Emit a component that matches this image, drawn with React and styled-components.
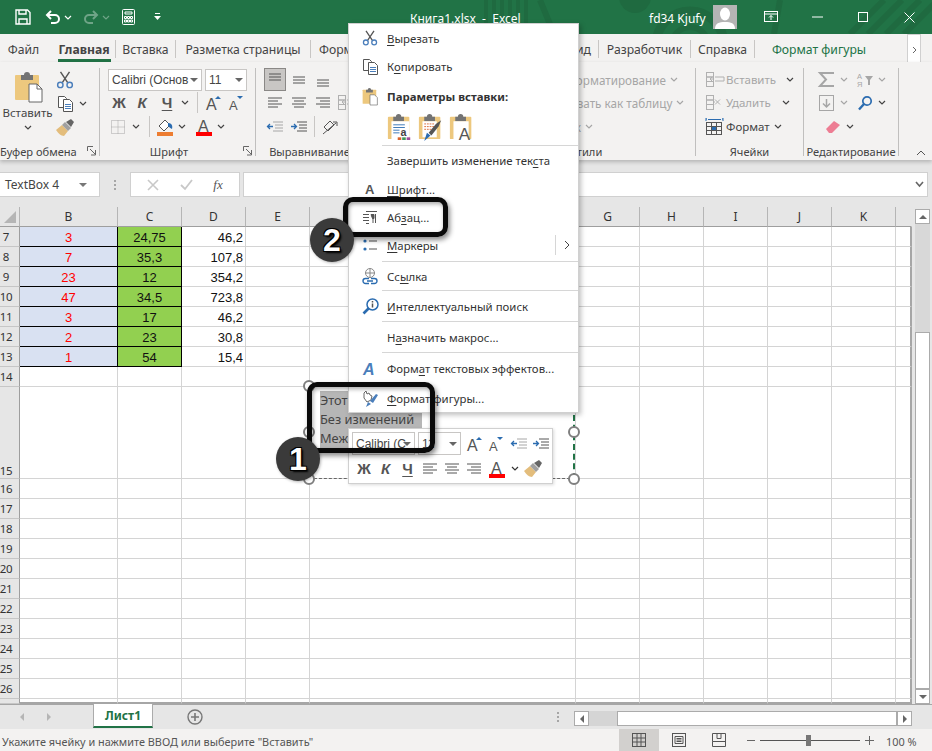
import React from 'react';
import styled, { createGlobalStyle } from 'styled-components';

const UI = `"Noto Sans", "Open Sans", sans-serif`;
const CELL = `"Liberation Sans", Arial, sans-serif`;

const Global = createGlobalStyle`
  html, body { margin: 0; padding: 0; background: #fff; }
  body { font-family: ${UI}; color: #444; }
  u { text-underline-offset: 2px; text-decoration-thickness: 1px; }
  svg { overflow: visible; }
`;

const Page = styled.div`
  position: relative;
  width: 932px;
  height: 751px;
  overflow: hidden;
  display: flex;
  flex-direction: column;
  background: #e6e6e6;
`;

/* ---------- title bar ---------- */
const TitleBar = styled.div`
  position: relative;
  height: 34px;
  flex: none;
  display: flex;
  align-items: center;
  background: #217346;
  color: #fff;
  font-size: 12px;
  overflow: hidden;
`;
const Pattern = styled.svg`
  position: absolute;
  inset: 0;
  overflow: hidden;
`;
const Quick = styled.div`
  position: relative;
  width: 410px;
  flex: none;
  display: flex;
  align-items: center;
  padding-left: 14px;
  box-sizing: border-box;
  height: 100%;
`;
const QuickSlot = styled.div`
  width: ${(p) => p.$w}px;
  flex: none;
  display: flex;
  align-items: center;
  justify-content: center;
  opacity: ${(p) => (p.$dim ? 0.35 : 1)};
`;
const DocTitle = styled.div`
  position: relative;
  width: 239px;
  flex: none;
  white-space: pre;
  padding-top: 3px;
  box-sizing: border-box;
`;
const UserName = styled.div`
  position: relative;
  width: 64px;
  flex: none;
  white-space: nowrap;
  padding-top: 3px;
  box-sizing: border-box;
`;
const Avatar = styled.div`
  position: relative;
  width: 24px;
  height: 24px;
  flex: none;
  background: #b4b4b4;
  overflow: hidden;
`;
const WinBtn = styled.div`
  position: relative;
  width: 46px;
  flex: none;
  display: flex;
  justify-content: center;
  margin-left: ${(p) => p.$ml || 0}px;
`;

/* ---------- tabs ---------- */
const TabRow = styled.div`
  height: 28px;
  flex: none;
  display: flex;
  background: #f3f2f1;
  position: relative;
`;
const Tab = styled.div`
  position: relative;
  width: ${(p) => p.$w}px;
  flex: none;
  display: flex;
  align-items: center;
  justify-content: center;
  font-size: 12.2px;
  font-weight: ${(p) => (p.$active ? 700 : 400)};
  color: ${(p) => (p.$green ? '#217346' : '#444')};
  white-space: nowrap;
  padding: 3px 0 0 ${(p) => p.$pl || 0}px;
  box-sizing: border-box;
  ${(p) => p.$sep && `border-right: 1px solid transparent;
    &::before { content: ''; position: absolute; right: -1px; top: 6px; height: 18px; width: 1px; background: #c8c6c4; }`}
  ${(p) => p.$active && `&::after { content: ''; position: absolute; left: 11px; right: 4px; bottom: 0; height: 3px; background: #217346; }`}
`;
const TabScroll = styled.div`
  position: absolute;
  right: 11px;
  top: 0;
  width: 12px;
  height: 29px;
  background: #fff;
  border: 1px solid #d0d0d0;
  display: flex;
  align-items: center;
  justify-content: center;
`;

/* ---------- ribbon ---------- */
const Ribbon = styled.div`
  position: relative;
  height: 98px;
  flex: none;
  display: flex;
  box-sizing: border-box;
  padding: 6px 0 4px;
  background: #f3f2f1;
  box-shadow: 0 2px 4px rgba(0, 0, 0, 0.22);
  z-index: 1;
`;
const Group = styled.div`
  width: ${(p) => p.$w}px;
  flex: none;
  box-sizing: border-box;
  display: flex;
  flex-direction: column;
  border-right: 1px solid ${(p) => (p.$noline ? 'transparent' : '#c0bfbe')};
`;
const GroupBody = styled.div`
  flex: 1;
  display: flex;
  padding-left: ${(p) => p.$pl || 0}px;
  min-height: 0;
`;
const GroupLabel = styled.div`
  height: 16px;
  margin-bottom: -3px;
  display: grid;
  grid-template-columns: 1fr auto 1fr;
  align-items: center;
  font-size: 11.1px;
  color: #444;
  white-space: nowrap;
  padding-right: ${(p) => p.$pr || 0}px;
  position: relative;
`;
const Launcher = styled.div`
  position: absolute;
  right: 2px;
  top: 3px;
  display: flex;
`;
const Stack = styled.div`
  display: flex;
  flex-direction: column;
  width: ${(p) => (p.$w ? `${p.$w}px` : 'auto')};
`;
const RowA = styled.div`
  height: ${(p) => p.$h || 23}px;
  display: flex;
  align-items: center;
  flex: none;
`;
const Tool = styled.div`
  width: ${(p) => p.$w || 22}px;
  height: ${(p) => p.$h || 22}px;
  margin-left: ${(p) => p.$ml || 0}px;
  flex: none;
  display: flex;
  align-items: center;
  justify-content: center;
  box-sizing: border-box;
  font-family: ${CELL};
  font-size: 15px;
  color: #555;
  ${(p) => p.$on && `background: #c8c6c4; border: 1px solid #8a8886;`}
`;
const Vsep = styled.div`
  width: 1px;
  height: 21px;
  background: #c8c6c4;
  margin-left: ${(p) => p.$ml || 0}px;
  flex: none;
`;
const Combo = styled.div`
  width: ${(p) => p.$w}px;
  height: ${(p) => p.$h || 22}px;
  margin-left: ${(p) => p.$ml || 0}px;
  flex: none;
  box-sizing: border-box;
  background: #fff;
  border: 1px solid #c8c6c4;
  display: flex;
  align-items: center;
  gap: 3px;
  padding: 0 3px;
  font-family: ${CELL};
  font-size: 12px;
  color: #444;
  white-space: nowrap;
`;
const ComboText = styled.span`
  flex: 1;
  min-width: 0;
`;
const PasteBtn = styled.div`
  width: 55px;
  flex: none;
  display: flex;
  flex-direction: column;
  align-items: center;
  font-size: 11.5px;
  color: #444;
  padding-top: 4px;
  & > span { margin: 3px 0 5px; }
`;
const StyleRow = styled(RowA)`
  padding-left: 34px;
  font-size: 11.7px;
  color: #a6a6a6;
  white-space: nowrap;
  gap: 4px;
`;
const CellRow = styled(RowA)`
  padding-left: 9px;
  font-size: 11.5px;
  color: ${(p) => (p.$dark ? '#444' : '#a6a6a6')};
  white-space: nowrap;
`;
const CellIcon = styled.div`
  width: 21px;
  flex: none;
  display: flex;
`;
const CellChev = styled.div`
  margin-left: ${(p) => p.$ml}px;
  display: flex;
`;
const Collapse = styled.div`
  flex: 1;
  display: flex;
  align-items: flex-end;
  justify-content: center;
  padding-left: 10px;
`;

/* ---------- formula bar ---------- */
const FormulaBar = styled.div`
  height: 47px;
  flex: none;
  box-sizing: border-box;
  padding-top: 12px;
  display: flex;
  align-items: flex-start;
  background: #e6e6e6;
`;
const NameBox = styled.div`
  width: 100px;
  height: 25px;
  box-sizing: border-box;
  background: #fff;
  border: 1px solid #d0d0d0;
  border-left: none;
  display: flex;
  align-items: center;
  justify-content: space-between;
  padding: 0 12px 0 5px;
  font-size: 12px;
  color: #444;
`;
const Dots = styled.div`
  width: 30px;
  height: 25px;
  display: flex;
  flex-direction: column;
  align-items: center;
  justify-content: center;
  gap: 2px;
  & > i { width: 2px; height: 2px; background: #a6a6a6; display: block; }
`;
const FxBox = styled.div`
  width: 110px;
  height: 25px;
  box-sizing: border-box;
  background: #fff;
  border: 1px solid #d0d0d0;
  display: flex;
  align-items: center;
  justify-content: space-around;
  padding: 0 6px;
`;
const FxLabel = styled.span`
  font-family: "Liberation Serif", serif;
  font-style: italic;
  font-size: 13px;
  color: #555;
`;
const Formula = styled.div`
  width: 685px;
  height: 25px;
  margin-left: 3px;
  box-sizing: border-box;
  background: #fff;
  border: 1px solid #d0d0d0;
  display: flex;
  align-items: center;
  justify-content: flex-end;
  padding-right: 3px;
`;

/* ---------- sheet ---------- */
const SheetArea = styled.div`
  height: 497px;
  flex: none;
  display: flex;
  background: #e6e6e6;
`;
const SheetGrid = styled.div`
  width: 912px;
  flex: none;
  display: grid;
  grid-template-columns: 20px 98px 64px 64px 64px 266px repeat(5, 64px) 16px;
  grid-template-rows: 20px repeat(8, 20px) 92px repeat(11, 20px) 5px;
  background: #fff;
`;
const ColHead = styled.div`
  background: #e6e6e6;
  border-right: 1px solid ${(p) => (p.$plain ? 'transparent' : '#b5b5b5')};
  border-bottom: 1px solid #9e9e9e;
  display: flex;
  align-items: center;
  justify-content: center;
  font-size: 12px;
  color: #333;
  position: relative;
`;
const RowHead = styled.div`
  background: #e6e6e6;
  border-right: 1px solid #9e9e9e;
  border-bottom: 1px solid #c6c6c6;
  display: flex;
  align-items: ${(p) => (p.$tall ? 'flex-end' : 'center')};
  justify-content: center;
  padding-right: 7px;
  font-size: 11.5px;
  letter-spacing: -0.3px;
  color: #333;
  white-space: nowrap;
`;
const Cell = styled.div`
  box-sizing: border-box;
  border-right: ${(p) => (p.$last ? '2px solid #a6a6a6' : p.$kind === 'b' || p.$kind === 'c' ? '1px solid #000' : '1px solid #d4d4d4')};
  border-bottom: ${(p) => (p.$kind === 'b' || p.$kind === 'c' ? '1px solid #000' : p.$edge ? '2px solid #a6a6a6' : '1px solid #d4d4d4')};
  background: ${(p) => (p.$kind === 'b' ? '#d9e1f2' : p.$kind === 'c' ? '#92d050' : '#fff')};
  color: ${(p) => (p.$kind === 'b' ? '#f00' : '#111')};
  display: flex;
  align-items: center;
  justify-content: ${(p) => (p.$kind === 'd' ? 'flex-end' : 'center')};
  padding: 1px ${(p) => (p.$kind === 'd' ? '2px' : '0')} 0 0;
  font-family: ${CELL};
  font-size: 13px;
`;
const VScroll = styled.div`
  width: 15px;
  margin-left: 3px;
  flex: none;
  display: flex;
  flex-direction: column;
  background: #d8d8d8;
  margin-top: 2px;
`;
const VBtn = styled.div`
  height: 15px;
  flex: none;
  box-sizing: border-box;
  background: #fff;
  border: 1px solid #ababab;
  display: flex;
  align-items: center;
  justify-content: center;
`;
const VThumb = styled.div`
  flex: 1;
  margin-top: 108px;
  box-sizing: border-box;
  background: #fff;
  border: 1px solid #ababab;
`;

/* ---------- sheet tabs + status ---------- */
const TabsBar = styled.div`
  height: 25px;
  flex: none;
  display: flex;
  background: #e6e6e6;
  border-top: 1px solid #a6a6a6;
  box-sizing: border-box;
`;
const NavArrows = styled.div`
  width: 93px;
  flex: none;
  display: flex;
  align-items: center;
  justify-content: flex-start;
  gap: 21px;
  padding-left: 19px;
  box-sizing: border-box;
`;
const SheetTab = styled.div`
  width: 60px;
  height: 24px;
  flex: none;
  box-sizing: border-box;
  margin-top: -1px;
  background: #fff;
  border-left: 1px solid #ababab;
  border-right: 1px solid #ababab;
  border-bottom: 2px solid #217346;
  display: flex;
  align-items: center;
  justify-content: center;
  font-size: 12px;
  font-weight: 700;
  color: #217346;
`;
const AddSheet = styled.div`
  margin-left: 34px;
  width: 16px;
  display: flex;
  align-items: center;
`;
const SplitDots = styled(Dots)`
  width: 6px;
  height: 24px;
  margin-left: 352px;
`;
const HScroll = styled.div`
  margin: 6px 0 0 13px;
  width: 337px;
  height: 15px;
  display: flex;
  background: #d5d5d5;
`;
const HBtn = styled.div`
  width: 15px;
  flex: none;
  box-sizing: border-box;
  background: #fff;
  border: 1px solid #ababab;
  display: flex;
  align-items: center;
  justify-content: center;
`;
const HThumb = styled.div`
  width: 280px;
  margin-left: 28px;
  flex: none;
  box-sizing: border-box;
  background: #fff;
  border: 1px solid #ababab;
`;
const StatusBar = styled.div`
  height: 22px;
  flex: none;
  display: flex;
  align-items: center;
  background: #f3f2f1;
  font-size: 10.9px;
  color: #555;
  white-space: nowrap;
`;
const StatusText = styled.div`
  width: 619px;
  flex: none;
  padding: 2px 0 0 2px;
  box-sizing: border-box;
`;
const ViewBtn = styled.div`
  width: 40px;
  height: 22px;
  flex: none;
  display: flex;
  align-items: center;
  justify-content: center;
  background: ${(p) => (p.$on ? '#d2d0ce' : 'transparent')};
`;
const ZoomSlider = styled.div`
  margin-left: 8px;
  display: flex;
  align-items: center;
  gap: 5px;
`;
const Track = styled.div`
  position: relative;
  width: 100px;
  height: 1px;
  background: #555;
`;
const Knob = styled.div`
  position: absolute;
  left: 46px;
  top: -5px;
  width: 5px;
  height: 11px;
  background: #777;
`;
const ZoomPct = styled.div`
  margin-left: 12px;
  padding-top: 2px;
`;

/* ---------- overlays ---------- */
const TextBox = styled.div`
  position: absolute;
  left: 309px;
  top: 386px;
  width: 266px;
  height: 93px;
  box-sizing: border-box;
  padding: 5px 0 0 10px;
  border-left: 1px dashed #666;
  border-bottom: 1px dashed #666;
  border-right: 2px dashed #217346;
  font-size: 12.8px;
  color: #444;
`;
const SelLine = styled.div`
  width: 102px;
  height: 19px;
  line-height: 19px;
  background: #b6b6b6;
  white-space: nowrap;
`;
const Handle = styled.div`
  position: absolute;
  width: 8px;
  height: 8px;
  border: 2px solid #7f7f7f;
  border-radius: 50%;
  background: #fff;
  left: ${(p) => p.$x - 6}px;
  top: ${(p) => p.$y - 6}px;
`;
const Menu = styled.div`
  position: absolute;
  left: 348px;
  top: 23px;
  width: 231px;
  height: 390px;
  box-sizing: border-box;
  background: #fff;
  border: 1px solid #d0d0d0;
  box-shadow: 2px 2px 5px rgba(0, 0, 0, 0.25);
  z-index: 3;
`;
const MenuItem = styled.div`
  height: ${(p) => p.$h || 28}px;
  display: flex;
  align-items: center;
  font-size: 11.4px;
  font-weight: ${(p) => (p.$bold ? 700 : 400)};
  color: #333;
  white-space: nowrap;
`;
const MenuIcon = styled.div`
  width: 38px;
  flex: none;
  display: flex;
  justify-content: center;
  padding-left: 4px;
  box-sizing: border-box;
`;
const MenuSep = styled.div`
  height: 1px;
  margin: ${(p) => p.$m || '0'};
  margin-left: 33px;
  background: #d6d6d6;
`;
const PasteIcons = styled.div`
  height: 33px;
  display: flex;
  padding: 2px 0 0 38px;
  gap: 6px;
  box-sizing: border-box;
`;
const SubMark = styled.div`
  margin-left: auto;
  height: 20px;
  width: 22px;
  border-left: 1px solid #d6d6d6;
  display: flex;
  align-items: center;
  justify-content: center;
`;
const Mini = styled.div`
  position: absolute;
  left: 348px;
  top: 428px;
  width: 205px;
  height: 56px;
  box-sizing: border-box;
  padding: 2px 0 0 3px;
  background: #fff;
  border: 1px solid #d0d0d0;
  box-shadow: 1px 1px 3px rgba(0, 0, 0, 0.15);
  z-index: 4;
`;
const MiniRow = styled.div`
  display: flex;
  align-items: center;
  height: 25px;
`;
const Callout = styled.div`
  position: absolute;
  left: ${(p) => p.$x}px;
  top: ${(p) => p.$y}px;
  width: ${(p) => p.$w}px;
  height: ${(p) => p.$h}px;
  box-sizing: border-box;
  border: 5px solid #0a0a0a;
  border-radius: 10px;
  box-shadow: 2px 3px 5px rgba(0, 0, 0, 0.45), inset 1px 2px 4px rgba(0, 0, 0, 0.35);
  z-index: 5;
`;
const Badge = styled.div`
  position: absolute;
  left: ${(p) => p.$x}px;
  top: ${(p) => p.$y}px;
  width: 44px;
  height: 44px;
  border-radius: 50%;
  background: #3a3a3a;
  display: flex;
  align-items: center;
  justify-content: center;
  color: #fff;
  font-family: ${CELL};
  font-weight: 700;
  font-size: 32px;
  text-shadow: 1px 1px 0 #000, -1px 1px 0 #000, 1px -1px 0 #000, -1px -1px 0 #000, 2px 2px 2px #000;
  box-shadow: 1px 1px 3px rgba(0, 0, 0, 0.3);
  z-index: 6;
`;

/* ---------- icons ---------- */
const Chev = ({ c = '#444', w = 8 }) => (
  <svg width={w} height="5" viewBox="0 0 8 5"><path d="M1 1l3 3 3-3" fill="none" stroke={c} strokeWidth="1.2" /></svg>
);
const Caret = ({ c = '#666', up, left, right }) => {
  let d = 'M0 0h8l-4 4z';
  if (up) d = 'M0 4h8l-4-4z';
  if (left) d = 'M5 0v8l-4-4z';
  if (right) d = 'M1 0v8l4-4z';
  return <svg width="8" height="8" viewBox={left || right ? '0 0 6 8' : '0 -2 8 8'} style={{ flex: 'none' }}><path d={d} fill={c} /></svg>;
};
const Scissors = ({ s = 20 }) => (
  <svg width={s} height={s} viewBox="0 0 20 20" fill="none">
    <path d="M5 1l8 12M15 1L7 13" stroke="#555" strokeWidth="1.6" />
    <circle cx="4.8" cy="15.5" r="3" stroke="#4a7ebb" strokeWidth="1.6" />
    <circle cx="15.2" cy="15.5" r="3" stroke="#4a7ebb" strokeWidth="1.6" />
  </svg>
);
const Copy = () => (
  <svg width="17" height="17" viewBox="0 0 17 17" fill="none">
    <path d="M1.5 1.5h6l2 2v9h-8z" fill="#fff" stroke="#555" />
    <path d="M6.5 4.5h6l3 3v9h-9z" fill="#fff" stroke="#555" />
    <path d="M8 9.5h6M8 11.5h6M8 13.5h6" stroke="#4a7ebb" />
  </svg>
);
const Brush = ({ s = 18 }) => (
  <svg width={s} height={s} viewBox="0 0 18 18">
    <path d="M0 11l6-5 6 6-4 5c-3 0-6-3-8-6z" fill="#e3bd7c" />
    <path d="M6 6l3-3 6 6-3 3z" fill="#a0a0a0" />
    <path d="M10 3l5-3 3 3-3 5z" fill="#666" />
  </svg>
);
const ClipBase = ({ children, w = 28, h = 30 }) => (
  <svg width={w} height={h} viewBox="0 0 28 30">
    <rect x="1" y="3" width="24" height="25" rx="1" fill="#edc87e" />
    <path d="M7 3h3a3 3 0 0 1 6 0h3v5H7z" fill="#737373" />
    {children}
  </svg>
);
const PasteBig = () => (
  <ClipBase>
    <path d="M15 12h8l5 5v13H15z" fill="#fff" stroke="#666" />
    <path d="M23 12v5h5" fill="none" stroke="#666" />
  </ClipBase>
);
const PasteKeep = () => (
  <ClipBase w={25} h={27}>
    <rect x="5" y="8" width="20" height="20" fill="#fff" />
    <path d="M7 12h13M7 15h13M7 18h7M7 21h7" stroke="#2b6cb0" />
    <text x="15" y="24" fontSize="12" fontWeight="700" fontFamily={CELL} fill="#444">a</text>
    <rect x="12" y="26" width="4" height="3" fill="#d9622b" /><rect x="17" y="26" width="4" height="3" fill="#3f9a5a" /><rect x="22" y="26" width="4" height="3" fill="#a14b9a" />
  </ClipBase>
);
const PasteFormat = () => (
  <ClipBase w={25} h={27}>
    <rect x="5" y="8" width="16" height="18" fill="#fff" />
    <path d="M7 11h12M7 14h12M7 17h10" stroke="#d9622b" strokeDasharray="2 1" />
    <path d="M7 30l3-9 4 3z" fill="#2b6cb0" />
    <path d="M12 21l8-10 6-4-3 7-8 10z" fill="#555" />
  </ClipBase>
);
const PasteText = () => (
  <ClipBase w={25} h={27}>
    <rect x="5" y="8" width="17" height="20" fill="#fff" />
    <text x="11" y="29" fontSize="19" fontFamily={CELL} fill="#555">A</text>
  </ClipBase>
);
const GrowA = ({ up }) => (
  <svg width="20" height="18" viewBox="0 0 20 18">
    <text x={up ? 3 : 2} y="16" fontSize={up ? 16 : 13} fontFamily={CELL} fill="#555">A</text>
    <path d={up ? 'M12 5l3-3 3 3z' : 'M10 2h6l-3 3z'} fill="#2b6cb0" />
  </svg>
);
const Lines = ({ kind, c = '#555' }) => {
  const rows = {
    left: ['M2 3h14', 'M2 6h10', 'M2 9h14', 'M2 12h10'],
    center: ['M2 3h14', 'M4 6h10', 'M2 9h14', 'M4 12h10'],
    right: ['M2 3h14', 'M6 6h10', 'M2 9h14', 'M6 12h10'],
    top: ['M3 2h12', 'M3 5h12', 'M3 8h12'],
    mid: ['M3 5h12', 'M3 8h12', 'M3 11h12'],
    bot: ['M3 8h12', 'M3 11h12', 'M3 14h12'],
  }[kind];
  return <svg width="18" height="16" viewBox="0 0 18 16">{rows.map((d) => <path key={d} d={d} stroke={c} fill="none" />)}</svg>;
};
const Indent = ({ out }) => (
  <svg width="18" height="14" viewBox="0 0 18 14" fill="none">
    <path d="M7 2h10M9 5h8M9 8h8M7 11h10" stroke={out ? '#a6a6a6' : '#555'} />
    <path d={out ? 'M7 6.5H2M4 4L1.5 6.5 4 9' : 'M1 6.5h5M4 4l2.5 2.5L4 9'} stroke="#2b6cb0" strokeWidth="1.3" />
  </svg>
);
const ColorA = ({ bar = '#f00' }) => (
  <svg width="18" height="18" viewBox="0 0 18 18">
    <text x="3" y="14" fontSize="16" fontFamily={CELL} fill="#555">A</text>
    <rect x="1" y="14" width="16" height="4" fill={bar} />
  </svg>
);
const Launch = () => (
  <svg width="10" height="10" viewBox="0 0 10 10" fill="none" stroke="#666">
    <path d="M.5 5V.5H6M3 3l5 5M8.5 4v5H4" />
  </svg>
);
const CellsIco = ({ variant }) => (
  <svg width="20" height="17" viewBox="0 0 20 17" fill="none" stroke={variant === 'fmt' ? '#555' : '#b0b0b0'}>
    {variant === 'fmt' ? (
      <>
        <path d="M1 1h1M1 0v3M17 1h1M18 0v3M3 1.5h13" stroke="#2b6cb0" />
        <rect x="1.5" y="4.5" width="15" height="12" />
        <path d="M1.5 8.5h15M1.5 12.5h15M6.5 4.5v12M11.5 4.5v12" />
        <rect x="6.5" y="8.5" width="5" height="4" fill="#2b6cb0" />
      </>
    ) : (
      <>
        <rect x="1.5" y="1.5" width="7" height="4.5" />
        <rect x="1.5" y="6" width="7" height="4.5" />
        <rect x="1.5" y="10.5" width="7" height="5" />
        {variant === 'ins' ? <path d="M10 6h9v4h-9M8 8h-3M7 6L5 8l2 2" /> : <path d="M10 5.5l5 5M15 5.5l-5 5M8 8h2" />}
      </>
    )}
  </svg>
);
const Search = () => (
  <svg width="16" height="16" viewBox="0 0 16 16" fill="none" stroke="#2b6cb0" strokeWidth="1.7">
    <circle cx="10" cy="6" r="4.2" /><path d="M7 9l-5 5.5" strokeWidth="2.4" />
  </svg>
);

export default function App() {
  const numbers = [
    [7, '3', '24,75', '46,2'], [8, '7', '35,3', '107,8'], [9, '23', '12', '354,2'],
    [10, '47', '34,5', '723,8'], [11, '3', '17', '46,2'], [12, '2', '23', '30,8'], [13, '1', '54', '15,4'],
  ];
  const rest = [14, 15, 16, 17, 18, 19, 20, 21, 22, 23, 24, 25, 26, 27];
  const blanks = 9; // E..L
  const cols = ['B', 'C', 'D', 'E', 'F', 'G', 'H', 'I', 'J', 'K', ''];

  return (
    <Page>
      <Global />
      <TitleBar>
        <Pattern width="932" height="34" viewBox="0 0 932 34" fill="none" stroke="#1f6a40">
          <path d="M486 0v34M494 0v34M502 0v34M510 0v34M518 0v34M526 0v34" strokeWidth="4" />
          <circle cx="635" cy="-3" r="16" fill="#1f6a40" stroke="none" />
          <circle cx="690" cy="45" r="34" strokeWidth="9" />
          <circle cx="690" cy="45" r="18" strokeWidth="6" />
          <path d="M540 0l14 34M780 0l-6 34M850 34L884 0M868 34L902 0M886 34L920 0M904 34L938 0" strokeWidth="6" />
        </Pattern>
        <Quick>
          <QuickSlot $w={17}>
            <svg width="16" height="16" viewBox="0 0 16 16" fill="none" stroke="#fff" strokeWidth="1.4">
              <path d="M1 1h11.5L15 3.5V15H1z" /><path d="M4 1v4h7V1M4 15v-5h8v5" />
            </svg>
          </QuickSlot>
          <QuickSlot $w={13} />
          <QuickSlot $w={18}>
            <svg width="16" height="15" viewBox="0 0 16 15" fill="none" stroke="#fff" strokeWidth="2">
              <path d="M6 1L2 5l4 4M2 5h8a4 4 0 0 1 0 8H6" />
            </svg>
          </QuickSlot>
          <QuickSlot $w={12}><Chev c="#fff" /></QuickSlot>
          <QuickSlot $w={8} />
          <QuickSlot $w={18} $dim>
            <svg width="16" height="15" viewBox="0 0 16 15" fill="none" stroke="#fff" strokeWidth="2">
              <path d="M10 1l4 4-4 4M14 5H6a4 4 0 0 0 0 8h4" />
            </svg>
          </QuickSlot>
          <QuickSlot $w={12} $dim><Chev c="#fff" /></QuickSlot>
          <QuickSlot $w={9} />
          <QuickSlot $w={14}>
            <svg width="13" height="16" viewBox="0 0 13 16" fill="none" stroke="#fff">
              <rect x=".5" y=".5" width="12" height="15" rx="1" />
              <path d="M3 3h7v2H3zM2.500 7.500h2v2h-2zM5.500 7.500h2v2h-2zM8.500 7.500h2v2h-2zM2.500 11h2v2h-2zM5.500 11h2v2h-2zM8.500 11h2v2h-2z" />
            </svg>
          </QuickSlot>
          <QuickSlot $w={15} />
          <QuickSlot $w={14}>
            <svg width="7" height="8" viewBox="0 0 7 8" fill="#fff"><path d="M1 0h5v1H1zM0 3h7L3.500 7z" /></svg>
          </QuickSlot>
        </Quick>
        <DocTitle>Книга1.xlsx  -  Excel</DocTitle>
        <UserName>fd34 Kjufy</UserName>
        <Avatar>
          <svg width="24" height="24" viewBox="0 0 24 24" fill="#fff">
            <ellipse cx="12" cy="9" rx="5" ry="6.5" /><path d="M2 24c0-6 4-7 10-7s10 1 10 7z" />
          </svg>
        </Avatar>
        <WinBtn $ml={11}>
          <svg width="14" height="12" viewBox="0 0 14 12" fill="none" stroke="#fff">
            <rect x=".5" y=".5" width="13" height="10" /><path d="M.5 3h13M7 9V4.500M5 6.500L7 4.500 9 6.500" />
          </svg>
        </WinBtn>
        <WinBtn>
          <svg width="11" height="2" viewBox="0 0 11 2"><path d="M0 1h11" stroke="#fff" /></svg>
        </WinBtn>
        <WinBtn>
          <svg width="10" height="10" viewBox="0 0 10 10"><rect x=".5" y=".5" width="9" height="9" fill="none" stroke="#fff" /></svg>
        </WinBtn>
        <WinBtn>
          <svg width="11" height="11" viewBox="0 0 11 11"><path d="M.5.5l10 10M10.500.5l-10 10" stroke="#fff" /></svg>
        </WinBtn>
      </TitleBar>

      <TabRow>
        <Tab $w={47}>Файл</Tab>
        <Tab $w={69} $active $sep $pl={6}>Главная</Tab>
        <Tab $w={60} $sep>Вставка</Tab>
        <Tab $w={135} $sep>Разметка страницы</Tab>
        <Tab $w={73} $sep>Формулы</Tab>
        <Tab $w={65} $sep />
        <Tab $w={112} $sep />
        <Tab $w={38} $sep>Вид</Tab>
        <Tab $w={92} $sep>Разработчик</Tab>
        <Tab $w={64} $sep>Справка</Tab>
        <Tab $w={128} $green>Формат фигуры</Tab>
        <TabScroll>
          <svg width="5" height="8" viewBox="0 0 5 8"><path d="M1 1l3 3-3 3" fill="none" stroke="#666" /></svg>
        </TabScroll>
      </TabRow>

      <Ribbon>
        <Group $w={100}>
          <GroupBody>
            <PasteBtn>
              <PasteBig />
              <span>Вставить</span>
              <Chev />
            </PasteBtn>
            <Stack>
              <RowA><Tool $w={20}><Scissors s={18} /></Tool></RowA>
              <RowA $h={25}><Tool $w={20}><Copy /></Tool><Tool $w={16}><Chev /></Tool></RowA>
              <RowA><Tool $w={20}><Brush /></Tool></RowA>
            </Stack>
          </GroupBody>
          <GroupLabel $pr={24}><span /><span>Буфер обмена</span><Launcher><Launch /></Launcher></GroupLabel>
        </Group>

        <Group $w={156}>
          <GroupBody $pl={8}>
            <Stack>
              <RowA>
                <Combo $w={94}><ComboText>Calibri (Основ</ComboText><Caret /></Combo>
                <Combo $w={42} $ml={3}><ComboText>11</ComboText><Caret /></Combo>
              </RowA>
              <RowA>
                <Tool $w={22}><b>Ж</b></Tool>
                <Tool $w={24}><b><i>К</i></b></Tool>
                <Tool $w={26}><b><u>Ч</u></b></Tool>
                <Tool $w={10}><Chev /></Tool>
                <Vsep $ml={7} />
                <Tool $w={30}><GrowA up /></Tool>
                <Tool $w={18}><GrowA /></Tool>
              </RowA>
              <RowA $h={25}>
                <Tool $w={20}>
                  <svg width="14" height="14" viewBox="0 0 14 14" fill="none" stroke="#a6a6a6" strokeDasharray="1 1">
                    <rect x=".5" y=".5" width="13" height="13" /><path d="M7 .5v13M.5 7h13" />
                  </svg>
                </Tool>
                <Tool $w={16}><Chev /></Tool>
                <Vsep $ml={5} />
                <Tool $w={22} $ml={4}>
                  <svg width="18" height="18" viewBox="0 0 18 18">
                    <path d="M3 8l6-6 5 5-6 6z" fill="#fff" stroke="#555" />
                    <path d="M12 5c3 0 5 2 4 6-2-1-3-2-4-3z" fill="#2b6cb0" />
                    <rect x="1" y="14" width="16" height="4" fill="#ed7d31" />
                  </svg>
                </Tool>
                <Tool $w={12}><Chev /></Tool>
                <Tool $w={22} $ml={5}><ColorA /></Tool>
                <Tool $w={12}><Chev /></Tool>
              </RowA>
            </Stack>
          </GroupBody>
          <GroupLabel $pr={17}><span /><span>Шрифт</span><Launcher><Launch /></Launcher></GroupLabel>
        </Group>

        <Group $w={108} $noline>
          <GroupBody $pl={8}>
            <Stack>
              <RowA>
                <Tool $h={23} $on><Lines kind="top" /></Tool>
                <Tool $ml={2}><Lines kind="mid" /></Tool>
                <Tool $ml={2}><Lines kind="bot" /></Tool>
              </RowA>
              <RowA>
                <Tool><Lines kind="left" /></Tool>
                <Tool $ml={2}><Lines kind="center" /></Tool>
                <Tool $ml={2}><Lines kind="right" /></Tool>
                <Tool $ml={2}><CellsIco variant="ins" /></Tool>
              </RowA>
              <RowA $h={25}>
                <Tool><Indent out /></Tool>
                <Tool $ml={2}><Indent /></Tool>
                <Vsep $ml={4} />
                <Tool $ml={4}>
                  <svg width="18" height="18" viewBox="0 0 18 18" fill="none" stroke="#555">
                    <path d="M3 9l6-6 4 4-6 6zM2 16l13-11M12 4h4v4" />
                  </svg>
                </Tool>
              </RowA>
            </Stack>
          </GroupBody>
          <GroupLabel><span /><span>Выравнивание</span><span /></GroupLabel>
        </Group>

        <Group $w={113} />

        <Group $w={219}>
          <GroupBody>
            <Stack>
              <StyleRow>Условное форматирование<Chev c="#a6a6a6" /></StyleRow>
              <StyleRow>Форматировать как таблицу<Chev c="#a6a6a6" /></StyleRow>
              <StyleRow $h={25}>Стили ячеек<Chev c="#a6a6a6" /></StyleRow>
            </Stack>
          </GroupBody>
          <GroupLabel><span /><span>Стили</span><span /></GroupLabel>
        </Group>

        <Group $w={108}>
          <GroupBody>
            <Stack>
              <CellRow><CellIcon><CellsIco variant="ins" /></CellIcon>Вставить<CellChev $ml={10}><Chev /></CellChev></CellRow>
              <CellRow><CellIcon><CellsIco variant="del" /></CellIcon>Удалить<CellChev $ml={11}><Chev /></CellChev></CellRow>
              <CellRow $h={25} $dark><CellIcon><CellsIco variant="fmt" /></CellIcon>Формат<CellChev $ml={4}><Chev /></CellChev></CellRow>
            </Stack>
          </GroupBody>
          <GroupLabel><span /><span>Ячейки</span><span /></GroupLabel>
        </Group>

        <Group $w={95}>
          <GroupBody $pl={13}>
            <Stack>
              <RowA>
                <Tool $w={18}>
                  <svg width="16" height="15" viewBox="0 0 16 15" fill="none" stroke="#a6a6a6" strokeWidth="2"><path d="M15 2V1H2l6 6.500L2 14h13v-1" /></svg>
                </Tool>
                <Tool $w={18}><Chev c="#a6a6a6" /></Tool>
                <Tool $w={24}>
                  <svg width="18" height="16" viewBox="0 0 18 16">
                    <text x="1" y="7" fontSize="7.5" fontFamily={CELL} fill="#a6a6a6">А</text>
                    <text x="1" y="15" fontSize="7.5" fontFamily={CELL} fill="#a6a6a6">Я</text>
                    <path d="M9 4h8l-3 4v5h-2V8z" fill="#a6a6a6" />
                  </svg>
                </Tool>
                <Tool $w={10}><Chev c="#a6a6a6" /></Tool>
              </RowA>
              <RowA>
                <Tool $w={18}>
                  <svg width="15" height="16" viewBox="0 0 15 16" fill="none" stroke="#a6a6a6">
                    <rect x=".5" y=".5" width="14" height="15" /><path d="M7.500 4v8M4 8.500l3.500 3.500L11 8.500" strokeWidth="1.5" />
                  </svg>
                </Tool>
                <Tool $w={18}><Chev c="#a6a6a6" /></Tool>
                <Tool $w={24}><Search /></Tool>
                <Tool $w={10}><Chev /></Tool>
              </RowA>
              <RowA $h={25}>
                <Tool $w={22} $ml={5}>
                  <svg width="16" height="14" viewBox="0 0 16 14"><path d="M1 9l8-8 6 4-8 8H4z" fill="#ed7d93" /></svg>
                </Tool>
                <Tool $w={11}><Chev /></Tool>
              </RowA>
            </Stack>
          </GroupBody>
          <GroupLabel><span /><span>Редактирование</span><span /></GroupLabel>
        </Group>

        <Collapse>
          <svg width="10" height="6" viewBox="0 0 10 6"><path d="M1 5l4-4 4 4" fill="none" stroke="#555" /></svg>
        </Collapse>
      </Ribbon>

      <FormulaBar>
        <NameBox>TextBox 4<Caret c="#777" /></NameBox>
        <Dots><i /><i /><i /></Dots>
        <FxBox>
          <svg width="12" height="12" viewBox="0 0 12 12"><path d="M1 1l10 10M11 1L1 11" stroke="#c8c8c8" strokeWidth="1.6" /></svg>
          <svg width="13" height="11" viewBox="0 0 13 11"><path d="M1 6l4 4 7-9" fill="none" stroke="#c8c8c8" strokeWidth="1.8" /></svg>
          <FxLabel>fx</FxLabel>
        </FxBox>
        <Formula><svg width="9" height="7" viewBox="0 0 9 7"><path d="M1 1l3.500 4L8 1" fill="none" stroke="#666" strokeWidth="1.6" /></svg></Formula>
      </FormulaBar>

      <SheetArea>
        <SheetGrid>
          <ColHead>
            <svg width="12" height="12" viewBox="0 0 12 12"><path d="M12 0v12H0z" fill="#b5b5b5" /></svg>
          </ColHead>
          {cols.map((c, i) => <ColHead key={i} $plain={c === ''}>{c === 'F' ? '' : c}</ColHead>)}
          {numbers.map(([n, b, c, d]) => (
            <React.Fragment key={n}>
              <RowHead>{n}</RowHead>
              <Cell $kind="b">{b}</Cell>
              <Cell $kind="c">{c}</Cell>
              <Cell $kind="d">{d}</Cell>
              {Array.from({ length: blanks - 1 }, (_, i) => <Cell key={i} $last={i === blanks - 2} />)}
            </React.Fragment>
          ))}
          {rest.map((n) => (
            <React.Fragment key={n}>
              <RowHead $tall={n === 15}>{n === 27 ? '' : n}</RowHead>
              {Array.from({ length: blanks + 2 }, (_, i) => <Cell key={i} $last={i === blanks + 1} $edge={n === 27} />)}
            </React.Fragment>
          ))}
        </SheetGrid>
        <VScroll>
          <VBtn><Caret up /></VBtn>
          <VThumb />
          <VBtn><Caret /></VBtn>
        </VScroll>
      </SheetArea>

      <TabsBar>
        <NavArrows>
          <svg width="6" height="8" viewBox="0 0 6 8"><path d="M5 0v8L1 4z" fill="#b5b5b5" /></svg>
          <svg width="6" height="8" viewBox="0 0 6 8"><path d="M1 0v8l4-4z" fill="#b5b5b5" /></svg>
        </NavArrows>
        <SheetTab>Лист1</SheetTab>
        <AddSheet>
          <svg width="16" height="16" viewBox="0 0 16 16" fill="none" stroke="#777" strokeWidth="1.4">
            <circle cx="8" cy="8" r="7" /><path d="M8 4v8M4 8h8" strokeWidth="1.6" />
          </svg>
        </AddSheet>
        <SplitDots><i /><i /><i /></SplitDots>
        <HScroll>
          <HBtn><Caret left c="#666" /></HBtn>
          <HThumb />
          <HBtn><Caret right c="#666" /></HBtn>
        </HScroll>
      </TabsBar>

      <StatusBar>
        <StatusText>Укажите ячейку и нажмите ВВОД или выберите "Вставить"</StatusText>
        <ViewBtn $on>
          <svg width="14" height="14" viewBox="0 0 14 14" fill="none" stroke="#555"><rect x=".5" y=".5" width="13" height="13" /><path d="M5 .5v13M9 .5v13M.5 5h13M.5 9h13" /></svg>
        </ViewBtn>
        <ViewBtn>
          <svg width="14" height="14" viewBox="0 0 14 14" fill="none" stroke="#555"><rect x=".5" y=".5" width="13" height="13" /><path d="M3 3.500h8v7H3zM4.500 5.500h5M4.500 7h5M4.500 8.500h5" /></svg>
        </ViewBtn>
        <ViewBtn>
          <svg width="14" height="14" viewBox="0 0 14 14" fill="none" stroke="#555"><path d="M.5 8.500V.5h13v13H.5v-5h13M5 .5v5h4V.5" /></svg>
        </ViewBtn>
        <ZoomSlider>
          <svg width="8" height="3" viewBox="0 0 8 3"><path d="M0 1.500h8" stroke="#666" /></svg>
          <Track><Knob /></Track>
          <svg width="9" height="9" viewBox="0 0 9 9"><path d="M0 4.500h9M4.500 0v9" stroke="#666" /></svg>
        </ZoomSlider>
        <ZoomPct>100 %</ZoomPct>
      </StatusBar>

      <TextBox>
        <SelLine>Этот</SelLine>
        <SelLine>Без изменений</SelLine>
        <SelLine>Меж</SelLine>
      </TextBox>
      <Handle $x={309} $y={386} />
      <Handle $x={309} $y={432} />
      <Handle $x={309} $y={479} />
      <Handle $x={574} $y={432} />
      <Handle $x={574} $y={479} />

      <Menu>
        <MenuItem><MenuIcon><Scissors s={16} /></MenuIcon><span><u>В</u>ырезать</span></MenuItem>
        <MenuItem $h={29}><MenuIcon><Copy /></MenuIcon><span>К<u>о</u>пировать</span></MenuItem>
        <MenuItem $h={31} $bold>
          <MenuIcon><ClipBase w={16} h={17}><path d="M14 12h8l5 5v13H14z" fill="#fff" stroke="#555" /></ClipBase></MenuIcon>
          <span>Параметры вставки:</span>
        </MenuItem>
        <PasteIcons><PasteKeep /><PasteFormat /><PasteText /></PasteIcons>
        <MenuSep />
        <MenuItem $h={29}><MenuIcon /><span>Завершить изменение тек<u>с</u>та</span></MenuItem>
        <MenuItem>
          <MenuIcon><svg width="12" height="12" viewBox="0 0 12 12"><text x="1" y="11" fontSize="13" fontFamily={CELL} fontWeight="700" fill="#555">A</text></svg></MenuIcon>
          <span><u>Ш</u>рифт...</span>
        </MenuItem>
        <MenuItem>
          <MenuIcon>
            <svg width="14" height="13" viewBox="0 0 14 13" fill="none" stroke="#555">
              <path d="M3 .5h11M0 3.500h6M0 6.500h6M0 9.500h6M3 12.500h3" /><path d="M10 4v8M12.500 3v9" /><path d="M8 3.500h3v4H9.500z" fill="#555" />
            </svg>
          </MenuIcon>
          <span>Аб<u>з</u>ац...</span>
        </MenuItem>
        <MenuItem>
          <MenuIcon>
            <svg width="14" height="13" viewBox="0 0 14 13">
              <circle cx="2" cy="2" r="1.6" fill="#2b6cb0" /><circle cx="2" cy="10" r="1.6" fill="#2b6cb0" />
              <path d="M6 2h8M6 10h8" stroke="#555" />
            </svg>
          </MenuIcon>
          <span><u>М</u>аркеры</span>
          <SubMark><svg width="6" height="10" viewBox="0 0 6 10"><path d="M1 1l4 4-4 4" fill="none" stroke="#444" /></svg></SubMark>
        </MenuItem>
        <MenuSep $m="2px 0 0" />
        <MenuItem>
          <MenuIcon>
            <svg width="16" height="16" viewBox="0 0 16 16" fill="none">
              <circle cx="8" cy="5" r="4.500" stroke="#888" /><path d="M3.500 5h9M8 .5v9" stroke="#888" />
              <path d="M7 10.500H3.500a2.500 2.500 0 0 0 0 5H7M9 10.500h3.500a2.500 2.500 0 0 1 0 5H9M5 13h6" stroke="#2b6cb0" strokeWidth="1.4" />
            </svg>
          </MenuIcon>
          <span>Сс<u>ы</u>лка</span>
        </MenuItem>
        <MenuSep />
        <MenuItem $h={30}>
          <MenuIcon>
            <svg width="17" height="17" viewBox="0 0 17 17" fill="none">
              <circle cx="10.500" cy="6.500" r="5.500" stroke="#2b6cb0" strokeWidth="1.5" /><path d="M6.500 10.500L1.500 15.500" stroke="#2b6cb0" strokeWidth="2.600" />
              <path d="M10.500 5.500v4M10.500 3v1.500" stroke="#555" strokeWidth="1.500" />
            </svg>
          </MenuIcon>
          <span><u>И</u>нтеллектуальный поиск</span>
        </MenuItem>
        <MenuSep />
        <MenuItem $h={30}><MenuIcon /><span>Н<u>а</u>значить макрос...</span></MenuItem>
        <MenuSep />
        <MenuItem $h={31}>
          <MenuIcon>
            <svg width="14" height="14" viewBox="0 0 14 14"><text x="0" y="13" fontSize="16" fontStyle="italic" fontWeight="700" fontFamily={CELL} fill="#4a7ebb">A</text></svg>
          </MenuIcon>
          <span>Форм<u>а</u>т текстовых эффектов...</span>
        </MenuItem>
        <MenuItem $h={28}>
          <MenuIcon>
            <svg width="17" height="17" viewBox="0 0 17 17" fill="none">
              <path d="M2 8V3l2-2 1 3 2-1 1 2 2 1-1 4-4 2z" stroke="#666" fill="#fff" />
              <path d="M4 17l2-5 3 2zM8 11l6-7 2 1-5 8z" fill="#4a7ebb" />
            </svg>
          </MenuIcon>
          <span><u>Ф</u>ормат фигуры...</span>
        </MenuItem>
      </Menu>

      <Mini>
        <MiniRow>
          <Combo $w={63} $h={23}><ComboText>Calibri (C</ComboText><Caret /></Combo>
          <Combo $w={43} $h={23} $ml={3}><ComboText>11</ComboText><Caret /></Combo>
          <Tool $w={22} $ml={2}><GrowA up /></Tool>
          <Tool $w={22} $ml={1}><GrowA /></Tool>
          <Tool $w={21}><Indent out /></Tool>
          <Tool $w={24}><Indent /></Tool>
        </MiniRow>
        <MiniRow>
          <Tool $w={22} $ml={1}><b>Ж</b></Tool>
          <Tool $w={21}><b><i>К</i></b></Tool>
          <Tool $w={23}><b><u>Ч</u></b></Tool>
          <Tool $w={22}><Lines kind="left" /></Tool>
          <Tool $w={22}><Lines kind="center" /></Tool>
          <Tool $w={22}><Lines kind="right" /></Tool>
          <Tool $w={24}><ColorA /></Tool>
          <Tool $w={11}><Chev c="#333" /></Tool>
          <Tool $w={26}><Brush /></Tool>
        </MiniRow>
      </Mini>

      <Callout $x={307} $y={382} $w={128} $h={71} />
      <Callout $x={343} $y={197} $w={105} $h={40} />
      <Badge $x={276} $y={437}>1</Badge>
      <Badge $x={310} $y={218}>2</Badge>
    </Page>
  );
}
